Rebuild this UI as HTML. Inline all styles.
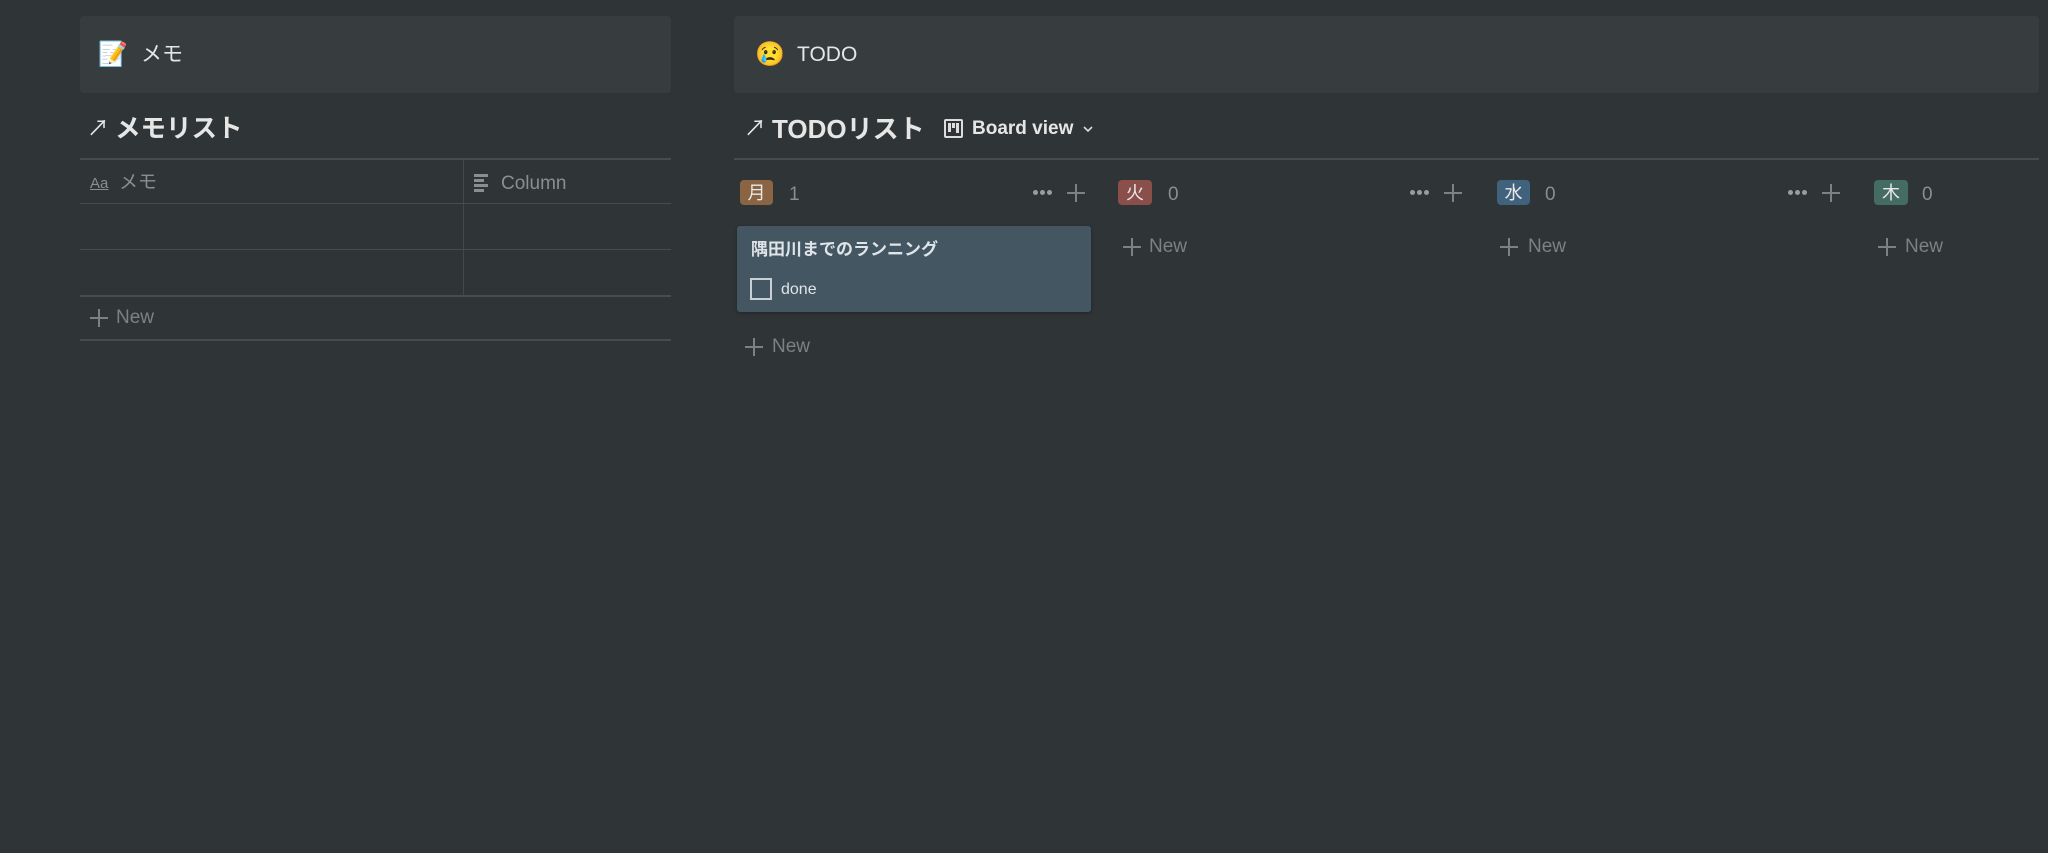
<!DOCTYPE html>
<html><head><meta charset="utf-8"><style>
*{margin:0;padding:0;box-sizing:border-box}
body{width:2048px;height:853px;background:#2f3437;font-family:"Liberation Sans","Noto Sans CJK JP",sans-serif;color:#e6e6e5;position:relative;overflow:hidden}
.a{position:absolute;white-space:nowrap;line-height:30px;height:30px}
.box{position:absolute;background:#373c3f;border-radius:4px}
.hl{position:absolute;height:2px;background:#474c4f}
.vl{position:absolute;width:1px;background:#434849}
.g{color:#8b8e90}
.tag{position:absolute;height:25px;border-radius:4px;font-size:18px;line-height:25px;text-align:center;color:#e8e8e8;font-family:"Noto Sans CJK JP",sans-serif}
.new{font-size:19px;color:#7d8184}
.plus{position:absolute;width:18px;height:18px}
.plus:before,.plus:after{content:"";position:absolute;background:#7d8184}
.plus:before{left:8px;top:0;width:2px;height:18px}
.plus:after{left:0;top:8px;width:18px;height:2px}
.dot{position:absolute;width:5px;height:5px;border-radius:50%;background:#9a9d9f}
</style></head><body>
<div class="box" style="left:80px;top:16px;width:591px;height:77px"></div>
<div class="a" style="left:98px;top:40px;font-size:24px">📝</div>
<div class="a" style="left:141px;top:40px;font-size:21px">メモ</div>
<div class="a" style="left:87px;top:114px;font-size:22px">↗</div>
<div class="a" style="left:115px;top:114px;font-size:25.5px;font-weight:bold">メモリスト</div>
<div class="hl" style="left:80px;top:158px;width:591px"></div>
<div class="a g" style="left:90px;top:169px;font-size:15px;text-decoration:underline">Aa</div>
<div class="a g" style="left:119px;top:168px;font-size:19px">メモ</div>
<div class="vl" style="left:463px;top:160px;height:136px"></div>
<div class="a" style="left:474px;top:174px;width:14px;height:20px"><div style="height:3px;background:#8b8e90;width:14px;margin-bottom:2px"></div><div style="height:3px;background:#8b8e90;width:10px;margin-bottom:2px"></div><div style="height:3px;background:#8b8e90;width:14px;margin-bottom:2px"></div><div style="height:3px;background:#8b8e90;width:10px"></div></div>
<div class="a g" style="left:501px;top:169px;font-size:19px">Column</div>
<div class="hl" style="left:80px;top:203px;width:591px;height:1px"></div>
<div class="hl" style="left:80px;top:249px;width:591px;height:1px"></div>
<div class="hl" style="left:80px;top:295px;width:591px"></div>
<div class="plus" style="left:90px;top:309px"></div>
<div class="a new" style="left:116px;top:303px">New</div>
<div class="hl" style="left:80px;top:339px;width:591px"></div>

<div class="box" style="left:734px;top:16px;width:1305px;height:77px"></div>
<div class="a" style="left:755px;top:40px;font-size:24px">😢</div>
<div class="a" style="left:797px;top:40px;font-size:21px">TODO</div>
<div class="a" style="left:744px;top:114px;font-size:22px">↗</div>
<div class="a" style="left:772px;top:114px;font-size:26px;font-weight:bold">TODOリスト</div>
<div class="a" style="left:944px;top:119px;width:19px;height:19px;border:2px solid #ddd;border-radius:2px"><div style="position:absolute;left:2px;top:2px;width:3px;height:9px;background:#ddd"></div><div style="position:absolute;left:6px;top:2px;width:3px;height:5px;background:#ddd"></div><div style="position:absolute;left:10px;top:2px;width:3px;height:10px;background:#ddd"></div></div>
<div class="a" style="left:972px;top:114px;font-size:19px;font-weight:bold">Board view</div>
<svg class="a" style="left:1082px;top:124px;width:12px;height:10px" viewBox="0 0 12 10"><path d="M2 3l4 4 4-4" stroke="#ddd" stroke-width="1.6" fill="none"/></svg>
<div class="hl" style="left:734px;top:158px;width:1305px"></div>

<div class="tag" style="left:740px;top:180px;width:33px;background:#8a6443">月</div>
<div class="a g" style="left:789px;top:180px;font-size:19px">1</div>
<div class="dot" style="left:1033px;top:190px"></div><div class="dot" style="left:1040px;top:190px"></div><div class="dot" style="left:1047px;top:190px"></div>
<div class="plus" style="left:1067px;top:184px"></div>
<div class="tag" style="left:1118px;top:180px;width:34px;background:#8a4f4b">火</div>
<div class="a g" style="left:1168px;top:180px;font-size:19px">0</div>
<div class="dot" style="left:1410px;top:190px"></div><div class="dot" style="left:1417px;top:190px"></div><div class="dot" style="left:1424px;top:190px"></div>
<div class="plus" style="left:1444px;top:184px"></div>
<div class="tag" style="left:1497px;top:180px;width:33px;background:#41627d">水</div>
<div class="a g" style="left:1545px;top:180px;font-size:19px">0</div>
<div class="dot" style="left:1788px;top:190px"></div><div class="dot" style="left:1795px;top:190px"></div><div class="dot" style="left:1802px;top:190px"></div>
<div class="plus" style="left:1822px;top:184px"></div>
<div class="tag" style="left:1874px;top:180px;width:34px;background:#456c62">木</div>
<div class="a g" style="left:1922px;top:180px;font-size:19px">0</div>

<div class="a" style="left:737px;top:226px;width:354px;height:86px;background:#455663;border-radius:3px;box-shadow:0 1px 3px rgba(0,0,0,.3)"></div>
<div class="a" style="left:751px;top:235px;font-size:17px;font-weight:bold;color:#dfe4e8">隅田川までのランニング</div>
<div class="a" style="left:750px;top:278px;width:22px;height:22px;border:2px solid #c8d0d5"></div>
<div class="a" style="left:781px;top:275px;font-size:16px;color:#dfe4e8">done</div>
<div class="plus" style="left:745px;top:338px"></div>
<div class="a new" style="left:772px;top:332px">New</div>
<div class="plus" style="left:1123px;top:238px"></div>
<div class="a new" style="left:1149px;top:232px">New</div>
<div class="plus" style="left:1500px;top:238px"></div>
<div class="a new" style="left:1528px;top:232px">New</div>
<div class="plus" style="left:1878px;top:238px"></div>
<div class="a new" style="left:1905px;top:232px">New</div>
</body></html>
